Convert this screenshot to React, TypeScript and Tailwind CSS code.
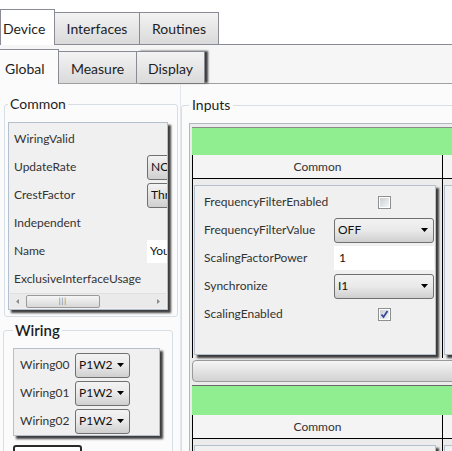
import type { ReactNode } from "react";

function Arrow() {
    return (
        <svg width="7" height="4" viewBox="0 0 7 4" className="shrink-0">
            <path d="M0 0h7L3.5 4z" fill="#000" />
        </svg>
    );
}

function Combo({ value, width }: { value: string; width: string }) {
    return (
        <div className={`${width} h-[25px] shrink-0 flex items-center justify-between pl-[3px] pr-[5px] rounded-[3px] border border-[#707070] bg-linear-to-b from-[#f3f3f3] via-[#e9e9e9] to-[#cfcfcf] text-[#111]`}>
            <span>{value}</span>
            <Arrow />
        </div>
    );
}

function Check({ checked }: { checked?: boolean }) {
    return (
        <div className="w-[13px] h-[13px] border border-[#8e8f8f] bg-white p-[1px]">
            <div className="w-full h-full bg-linear-to-br from-[#cbcfd5] to-[#f6f6f6] flex items-center justify-center">
                {checked && (
                    <svg width="9" height="9" viewBox="0 0 9 9">
                        <path d="M1.5 4.5l2 2.5L7.5 1" stroke="#3a4a9a" strokeWidth="1.8" fill="none" />
                    </svg>
                )}
            </div>
        </div>
    );
}

function Tab({ label, selected, className }: { label: string; selected?: boolean; className: string }) {
    return (
        <div
            className={`${className} flex items-end border-t border-r border-[#898c95] ${
                selected ? "bg-white relative z-10" : "justify-center bg-linear-to-b from-[#f3f3f3] to-[#dadada]"
            }`}
        >
            <span className="leading-[18px]">{label}</span>
        </div>
    );
}

function Row({ label, children, labelWidth }: { label?: string; children?: ReactNode; labelWidth: string }) {
    return (
        <div className="h-[28px] flex items-center">
            <span className={`${labelWidth} shrink-0 whitespace-nowrap`}>{label}</span>
            {children}
        </div>
    );
}

function InputsPanel({ filled }: { filled?: boolean }) {
    return (
        <div className="w-[242px] h-[170px] border border-[#b4c0cc] bg-[#f0f0f0] shadow-[3px_3px_2px_rgba(0,0,0,0.75)] pl-[9px] pt-[2px] text-[#333]">
            {filled && (
                <>
                    <Row label="FrequencyFilterEnabled" labelWidth="w-[130px]">
                        <div className="w-[100px] flex justify-center">
                            <Check />
                        </div>
                    </Row>
                    <Row label="FrequencyFilterValue" labelWidth="w-[130px]">
                        <Combo value="OFF" width="w-[100px]" />
                    </Row>
                    <Row label="ScalingFactorPower" labelWidth="w-[130px]">
                        <div className="w-[100px] h-[24px] bg-white flex items-center pl-[5px] text-[#111]">1</div>
                    </Row>
                    <Row label="Synchronize" labelWidth="w-[130px]">
                        <Combo value="I1" width="w-[100px]" />
                    </Row>
                    <Row label="ScalingEnabled" labelWidth="w-[130px]">
                        <div className="w-[100px] flex justify-center">
                            <Check checked />
                        </div>
                    </Row>
                </>
            )}
        </div>
    );
}

function PropertyTable() {
    return (
        <div className="flex border-l border-black">
            {[0, 1].map((col) => (
                <div key={col} className="w-[250px] shrink-0 border-r border-black">
                    <div className="h-[24px] border-b border-black bg-[#f4f4f4] flex items-center justify-center text-[#333]">
                        {col === 0 ? "Common" : ""}
                    </div>
                    <div className="pl-[1px] pt-[6px] pb-[3px]">
                        <InputsPanel filled={col === 0} />
                    </div>
                </div>
            ))}
        </div>
    );
}

function GrayButton({ text }: { text: string }) {
    return (
        <div className="w-[60px] h-[25px] shrink-0 rounded-[3px] border border-[#707070] bg-linear-to-b from-[#f3f3f3] to-[#d0d0d0] flex items-center pl-[3px] text-[#111] whitespace-nowrap">
            {text}
        </div>
    );
}

export default function App() {
    return (
        <div className="w-[452px] h-[451px] overflow-hidden bg-white text-[12px] text-[#1e1e1e] [font-family:Lato,'Open_Sans',sans-serif]">
            {/* top tabs */}
            <div className="h-[45px] flex items-end border-b border-[#898c95] text-[14px]">
                <Tab label="Device" selected className="w-[55px] h-[36px] -mb-[1px] pb-[7px] pl-[2px] border-l" />
                <Tab label="Interfaces" className="w-[85px] h-[32px] pb-[6px]" />
                <Tab label="Routines" className="w-[79px] h-[32px] pb-[6px]" />
            </div>

            {/* second tabs */}
            <div className="h-[39px] flex items-end border-b border-[#a0a0a0] bg-[#f6f6f6] text-[14px]">
                <Tab label="Global" selected className="w-[59px] h-[35px] -mb-[1px] pb-[6px] pl-[5px] !bg-[#fbfbfb]" />
                <Tab label="Measure" className="w-[78px] h-[32px] pb-[5px]" />
                <Tab label="Display" className="w-[68px] h-[32px] pb-[5px] shadow-[3px_0_2px_rgba(0,0,0,0.75)]" />
            </div>

            <div className="flex bg-[#fbfbfb] h-full">
                {/* left column */}
                <div className="w-[181px] shrink-0 border-r border-[#e2e8ee] pt-[11px]">
                    <fieldset className="ml-[4px] w-[174px] border border-[#d5dfe5] rounded-[3px] px-[3px] pb-[6px]">
                        <legend className="px-[2px] text-[14px] leading-[18px]">Common</legend>
                        <div className="mt-[9px] w-[160px] border border-[#b4c0cc] bg-[#f0f0f0] shadow-[3px_3px_2px_rgba(0,0,0,0.75)] text-[#333]">
                            <div className="overflow-hidden pl-[5px] pt-[2px]">
                                <Row label="WiringValid" labelWidth="w-[133px]" />
                                <Row label="UpdateRate" labelWidth="w-[133px]">
                                    <GrayButton text="NONE" />
                                </Row>
                                <Row label="CrestFactor" labelWidth="w-[133px]">
                                    <GrayButton text="Three" />
                                </Row>
                                <Row label="Independent" labelWidth="w-[133px]" />
                                <Row label="Name" labelWidth="w-[133px]">
                                    <div className="w-[60px] h-[23px] shrink-0 bg-white flex items-center pl-[3px] text-[#111] whitespace-nowrap">Your</div>
                                </Row>
                                <Row label="ExclusiveInterfaceUsage" labelWidth="w-[133px]" />
                            </div>
                            {/* horizontal scrollbar */}
                            <div className="h-[15px] mx-[1px] mb-[1px] flex items-center bg-[#eaeaea] border-t border-[#e0e0e0]">
                                <div className="w-[15px] flex justify-center">
                                    <svg width="3" height="5" viewBox="0 0 3 5"><path d="M3 0v5L0 2.5z" fill="#8a8a8a" /></svg>
                                </div>
                                <div className="w-[74px] h-[13px] ml-[1px] rounded-[2px] border border-[#9a9a9a] bg-linear-to-b from-[#f6f6f6] to-[#d8d8d8] flex items-center justify-center">
                                    <span className="text-[7px] leading-none text-[#666] tracking-[1px]">|||</span>
                                </div>
                                <div className="flex-1" />
                                <div className="w-[15px] flex justify-center">
                                    <svg width="3" height="5" viewBox="0 0 3 5"><path d="M0 0v5L3 2.5z" fill="#8a8a8a" /></svg>
                                </div>
                            </div>
                        </div>
                    </fieldset>

                    <fieldset className="mt-[4px] ml-[3px] w-[170px] border border-[#d5dfe5] rounded-[3px] pl-[9px] pb-[8px]">
                        <legend className="px-[2px] text-[15px] font-semibold leading-[18px]">Wiring</legend>
                        <div className="mt-[9px] w-[147px] border border-[#b4c0cc] bg-[#f0f0f0] shadow-[3px_3px_2px_rgba(0,0,0,0.75)] pl-[6px] pt-[2px] text-[#333]">
                            {["Wiring00", "Wiring01", "Wiring02"].map((w) => (
                                <Row key={w} label={w} labelWidth="w-[55px]">
                                    <Combo value="P1W2" width="w-[55px]" />
                                </Row>
                            ))}
                        </div>
                        <div className="mt-[9px] w-[69px] h-[20px] border-2 border-[#2a2a2a] rounded-t-[3px] bg-white" />
                    </fieldset>
                </div>

                {/* right column */}
                <div className="flex-1 overflow-hidden pt-[12px]">
                    <fieldset className="w-[520px] border border-[#d5dfe5] rounded-[3px] pl-[7px]">
                        <legend className="px-[3px] text-[14px] leading-[18px]">Inputs</legend>
                        <div className="mt-[9px] border border-[#b0b8c2] bg-[#ececec] pl-[2px] pt-[3px]">
                            <div className="h-[28px] bg-[#90ee90] border-t border-[#8a8a8a]" />
                            <PropertyTable />
                            <div className="mt-[2px] h-[22px] rounded-l-[4px] border border-[#9a9a9a] bg-linear-to-b from-[#f5f5f5] to-[#d2d2d2]" />
                            <div className="mt-[3px] h-[30px] bg-[#90ee90] border-t border-[#6a6a6a]" />
                            <PropertyTable />
                        </div>
                    </fieldset>
                </div>
            </div>
        </div>
    );
}
